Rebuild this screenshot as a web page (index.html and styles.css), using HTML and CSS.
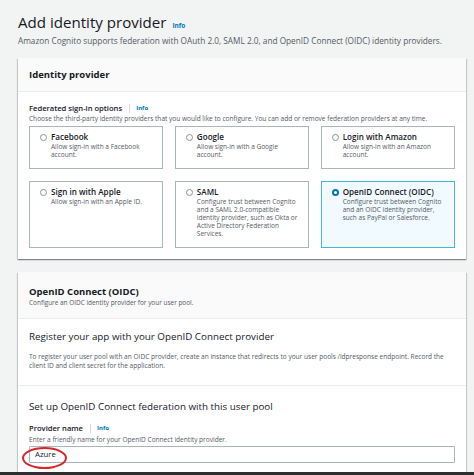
FILE: index.html
```html
<!DOCTYPE html>
<html lang="en">
<head>
<meta charset="utf-8">
<title>Add identity provider</title>
<link rel="stylesheet" href="styles.css">
</head>
<body>
<div class="page">
  <header class="page-head">
    <h1 class="title">Add identity provider <a class="info info-title">Info</a></h1>
    <p class="subtitle">Amazon Cognito supports federation with OAuth 2.0, SAML 2.0, and OpenID Connect (OIDC) identity providers.</p>
  </header>

  <section class="card">
    <div class="card-head">
      <h2 class="card-title">Identity provider</h2>
    </div>
    <div class="card-body">
      <div class="field-label">Federated sign-in options <span class="sep"></span><a class="info">Info</a></div>
      <div class="field-desc">Choose the third-party identity providers that you would like to configure. You can add or remove federation providers at any time.</div>
      <div class="tiles">
        <div class="tile">
          <span class="radio"></span>
          <div class="tile-text">
            <div class="tile-title">Facebook</div>
            <div class="tile-desc">Allow sign-in with a Facebook account.</div>
          </div>
        </div>
        <div class="tile">
          <span class="radio"></span>
          <div class="tile-text">
            <div class="tile-title">Google</div>
            <div class="tile-desc">Allow sign-in with a Google account.</div>
          </div>
        </div>
        <div class="tile">
          <span class="radio"></span>
          <div class="tile-text">
            <div class="tile-title">Login with Amazon</div>
            <div class="tile-desc">Allow sign-in with an Amazon account.</div>
          </div>
        </div>
        <div class="tile">
          <span class="radio"></span>
          <div class="tile-text">
            <div class="tile-title">Sign in with Apple</div>
            <div class="tile-desc">Allow sign-in with an Apple ID.</div>
          </div>
        </div>
        <div class="tile">
          <span class="radio"></span>
          <div class="tile-text">
            <div class="tile-title">SAML</div>
            <div class="tile-desc">Configure trust between Cognito and a SAML 2.0-compatible identity provider, such as Okta or Active Directory Federation Services.</div>
          </div>
        </div>
        <div class="tile tile-selected">
          <span class="radio radio-on"></span>
          <div class="tile-text">
            <div class="tile-title">OpenID Connect (OIDC)</div>
            <div class="tile-desc">Configure trust between Cognito and an OIDC identity provider, such as PayPal or Salesforce.</div>
          </div>
        </div>
      </div>
    </div>
  </section>

  <section class="card card-oidc">
    <div class="card-head card-head-tall">
      <h2 class="card-title">OpenID Connect (OIDC)</h2>
      <div class="card-desc">Configure an OIDC identity provider for your user pool.</div>
    </div>
    <div class="section">
      <h3 class="section-title">Register your app with your OpenID Connect provider</h3>
      <p class="section-desc">To register your user pool with an OIDC provider, create an instance that redirects to your user pools /idpresponse endpoint. Record the client ID and client secret for the application.</p>
    </div>
    <div class="section section-last">
      <h3 class="section-title">Set up OpenID Connect federation with this user pool</h3>
      <div class="field-label">Provider name <span class="sep"></span><a class="info">Info</a></div>
      <div class="field-desc">Enter a friendly name for your OpenID Connect identity provider.</div>
      <div class="input-wrap">
        <div class="input">Azure</div>
        <span class="mark"></span>
      </div>
    </div>
  </section>
</div>
<div class="bottom-bar"></div>
</body>
</html>
```

FILE: styles.css
```css
* { box-sizing: border-box; }

html, body {
  margin: 0;
  padding: 0;
  background: #f2f3f3;
  font-family: "Open Sans", "Liberation Sans", Arial, sans-serif;
  color: #16191f;
  overflow: hidden;
  height: 475px;
}

.page {
  padding: 12px 8px 0 18px;
}

.page-head {
  padding-bottom: 12px;
}

.title {
  margin: 0;
  font-size: 15.1px;
  line-height: 21px;
  font-weight: 400;
}

.info {
  color: #0073bb;
  font-weight: 700;
  font-size: 6px;
  line-height: 0;
  text-decoration: none;
}

.info-title {
  font-size: 6.5px;
  margin-left: 2px;
}

.subtitle {
  margin: 2px 0 0;
  font-size: 8.25px;
  line-height: 11px;
  color: #545b64;
}

.card {
  background: #fff;
  box-shadow: 0 1px 1px 0 rgba(0, 28, 36, 0.3), 1px 1px 1px 0 rgba(0, 28, 36, 0.15), -1px 1px 1px 0 rgba(0, 28, 36, 0.15);
}

.card-oidc {
  margin-top: 13px;
}

.card-head {
  background: #fafafa;
  border-bottom: 1px solid #eaeded;
  height: 34px;
  padding: 0 11px;
  display: flex;
  flex-direction: column;
  justify-content: center;
}

.card-head-tall {
  height: 47px;
  padding-top: 2px;
}

.card-title {
  margin: 0;
  font-size: 9.5px;
  line-height: 13px;
  font-weight: 700;
}

.card-desc {
  font-size: 6.45px;
  line-height: 9px;
  color: #545b64;
}

.card-body {
  padding: 10.5px 11px 11px;
}

.field-label {
  font-size: 7.6px;
  line-height: 11px;
  font-weight: 600;
  display: flex;
  align-items: center;
}

.field-label .sep {
  display: inline-block;
  width: 1px;
  height: 9px;
  background: #d5dbdb;
  margin: 0 6px 0 7px;
}

.field-desc {
  font-size: 6.55px;
  line-height: 10px;
  color: #545b64;
}

.tiles {
  margin-top: 2.5px;
  display: grid;
  grid-template-columns: repeat(3, 1fr);
  column-gap: 11.5px;
  row-gap: 12px;
}

.tile {
  border: 1px solid #aab7b8;
  padding: 5px 8px 9px 10px;
  display: flex;
  gap: 4px;
  align-items: flex-start;
}

.tile-selected {
  background: #f1faff;
  border-color: #44b9d6;
}

.radio {
  flex: none;
  width: 7px;
  height: 7px;
  border-radius: 50%;
  border: 1px solid #879596;
  background: #fff;
  margin-top: 1.5px;
}

.radio-on {
  border: 2.2px solid #0073bb;
}

.tile-title {
  font-size: 8.1px;
  line-height: 10px;
  font-weight: 600;
}

.tile-desc {
  font-size: 6.5px;
  line-height: 8px;
  color: #545b64;
  margin-top: 1px;
}

.section {
  padding: 10px 11px 14.5px;
  border-bottom: 1px solid #eaeded;
}

.section-last {
  border-bottom: none;
  padding-top: 13px;
}

.section-title {
  margin: 0 0 7px;
  font-size: 9.8px;
  line-height: 16px;
  font-weight: 400;
}

.section-desc {
  margin: 0;
  font-size: 6.55px;
  line-height: 9px;
  color: #545b64;
}

.section-last .section-title {
  margin-bottom: 8px;
}

.section-last .field-desc {
  line-height: 9px;
  margin-top: 1px;
}

.input-wrap {
  position: relative;
  margin-top: 2.5px;
}

.input {
  height: 17px;
  border: 1px solid #aab7b8;
  border-radius: 1px;
  padding: 0 5px;
  font-size: 7.8px;
  line-height: 15px;
}

.mark {
  position: absolute;
  left: -7px;
  top: 1px;
  width: 45px;
  height: 22px;
  border: 2px solid #d9262c;
  border-radius: 50%;
}

.bottom-bar {
  position: fixed;
  left: 0;
  right: 0;
  bottom: 0;
  height: 3px;
  background: #2e2e2e;
}
```
